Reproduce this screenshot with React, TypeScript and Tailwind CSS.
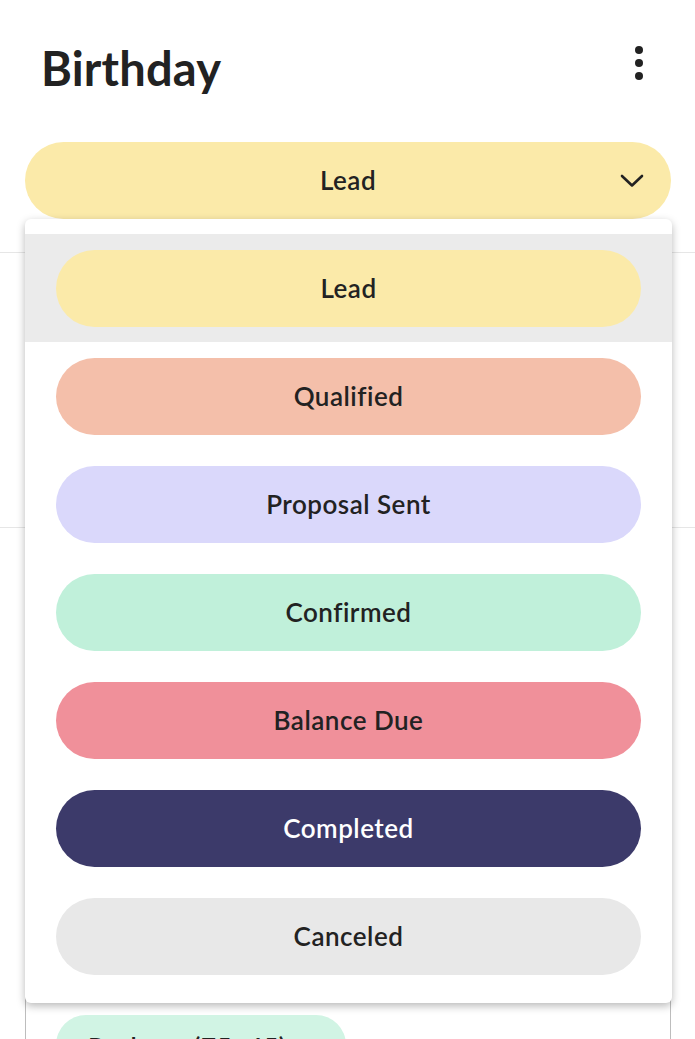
import React from 'react';

const statuses = [
  { label: 'Lead', bg: 'bg-[#fbeaa9]', text: 'text-[#222222]' },
  { label: 'Qualified', bg: 'bg-[#f4bfaa]', text: 'text-[#222222]' },
  { label: 'Proposal Sent', bg: 'bg-[#dad8fb]', text: 'text-[#222222]' },
  { label: 'Confirmed', bg: 'bg-[#c0f0da]', text: 'text-[#222222]' },
  { label: 'Balance Due', bg: 'bg-[#f0909a]', text: 'text-[#222222]' },
  { label: 'Completed', bg: 'bg-[#3c3a6a]', text: 'text-white' },
  { label: 'Canceled', bg: 'bg-[#e8e8e8]', text: 'text-[#222222]' },
];

const App: React.FC = () => {
  return (
    <div className="relative h-[1039px] w-full overflow-hidden bg-white font-['Lato','Noto_Sans',sans-serif] text-[#222222]">
      {/* header */}
      <div className="flex h-[138px] items-start justify-between pl-[41px] pr-[48px] pt-[39px]">
        <h1 className="text-[47px] font-bold leading-[58px] tracking-[0.2px]">Birthday</h1>
        <button className="mt-[3px] flex flex-col items-center gap-[5px] p-1">
          <span className="h-[8px] w-[8px] rounded-full bg-[#222222]" />
          <span className="h-[8px] w-[8px] rounded-full bg-[#222222]" />
          <span className="h-[8px] w-[8px] rounded-full bg-[#222222]" />
        </button>
      </div>

      {/* status select */}
      <div className="relative ml-[25px] mr-[24px] mt-[4px] flex h-[77px] items-center justify-center rounded-full bg-[#fbeaa9]">
        <span className="text-[26px] font-semibold tracking-[0.5px]">Lead</span>
        <svg className="absolute right-[27px] top-[32px]" width="24" height="14" viewBox="0 0 24 14" fill="none">
          <path d="M2 2 L12 11.5 L22 2" stroke="#222222" strokeWidth="2.6" strokeLinecap="round" strokeLinejoin="round" />
        </svg>
      </div>

      {/* content behind the menu */}
      <div className="mt-[33px] border-t border-[#e6e6e6]">
        <div className="h-[274px]" />
        <div className="border-t border-[#e6e6e6]">
          <div className="ml-[25px] mr-[24px] mt-[32px] h-[520px] rounded-md border border-[#bdbdbd] px-[30px] pt-[454px]">
            <div className="flex h-[60px] w-[290px] items-start rounded-full bg-[#d1f4e4] pl-[32px] pt-[17px]">
              <span className="text-[26px] font-semibold leading-[30px] tracking-[0.5px]">Package (75+45)</span>
            </div>
          </div>
        </div>
      </div>

      {/* dropdown menu */}
      <div className="absolute left-[25px] top-[219px] w-[647px] rounded-md bg-white pb-[13px] pt-[15px] shadow-[0_3px_8px_rgba(0,0,0,0.28)]">
        {statuses.map((s, i) => (
          <div
            key={s.label}
            className={`flex h-[108px] items-center px-[31px] ${i === 0 ? 'bg-[#ebebeb]' : ''}`}
          >
            <div className={`flex h-[77px] w-full items-center justify-center rounded-full ${s.bg} ${s.text}`}>
              <span className="text-[26px] font-semibold tracking-[0.5px]">{s.label}</span>
            </div>
          </div>
        ))}
      </div>
    </div>
  );
};

export default App;
